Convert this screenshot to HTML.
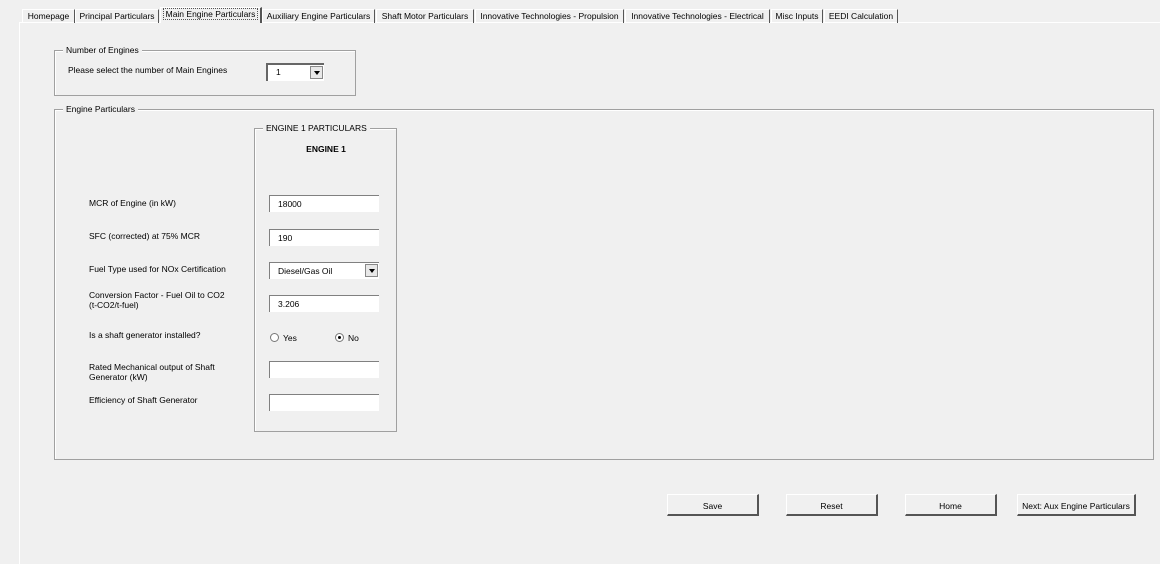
<!DOCTYPE html><html><head><style>
body{margin:0;width:1160px;height:563px;background:#f0f0f0;font-family:"Liberation Sans",sans-serif;font-size:8.5px;color:#000;position:relative;overflow:hidden}
.a{position:absolute}
.tab{position:absolute;top:9px;height:13px;line-height:13px;text-align:center;border-right:1px solid #555;border-left:1px solid #fff;border-top:1px solid #fff;white-space:nowrap}
.fs{position:absolute;border:1px solid #a0a0a0;box-shadow:inset 1px 1px 0 #fff;box-sizing:border-box}
.lg{position:absolute;top:-6px;left:8px;background:#f0f0f0;padding:0 3px;line-height:11px}
.in{position:absolute;left:269px;width:110px;height:17px;background:#fff;border-top:1px solid #808080;border-left:1px solid #808080;box-sizing:border-box;padding:3px 0 0 8px}
.lb{position:absolute;left:89px;line-height:10px}
.btn{position:absolute;top:494px;height:22px;line-height:22px;text-align:center;background:#f0f0f0;border:1px solid #fff;border-right:2px solid #555;border-bottom:2px solid #555;box-sizing:border-box}
.dd{position:absolute;width:13px;height:13px;background:#e8e8e8;border:1px solid #888;box-sizing:border-box}
.dd:after{content:"";position:absolute;left:3px;top:4px;border:3px solid transparent;border-top:4px solid #000}
</style></head><body>
<div class="a" style="left:19px;top:22px;width:1141px;height:541px;border-left:1px solid #fff;border-top:1px solid #fff"></div>
<div class="tab" style="left:22px;width:51px">Homepage</div>
<div class="tab" style="left:75px;width:82px">Principal Particulars</div>
<div class="tab" style="left:160px;top:7px;height:15px;width:99px;border-right:2px solid #555;background:#f0f0f0"><span style="border:1px dotted #555;padding:0 2px">Main Engine Particulars</span></div>
<div class="tab" style="left:262px;width:111px">Auxiliary Engine Particulars</div>
<div class="tab" style="left:376px;width:96px">Shaft Motor Particulars</div>
<div class="tab" style="left:475px;width:147px">Innovative Technologies - Propulsion</div>
<div class="tab" style="left:625px;width:143px">Innovative Technologies - Electrical</div>
<div class="tab" style="left:771px;width:50px">Misc Inputs</div>
<div class="tab" style="left:824px;width:72px">EEDI Calculation</div>

<div class="fs" style="left:54px;top:50px;width:302px;height:46px"><div class="lg">Number of Engines</div></div>
<div class="a" style="left:68px;top:65px">Please select the number of Main Engines</div>
<div class="a" style="left:266px;top:63px;width:58px;height:18px;background:#fff;border-top:2px solid #666;border-left:2px solid #666;box-sizing:border-box;padding:2px 0 0 8px">1</div>
<div class="dd" style="left:310px;top:66px"></div>

<div class="fs" style="left:54px;top:109px;width:1100px;height:351px"><div class="lg">Engine Particulars</div></div>
<div class="fs" style="left:254px;top:128px;width:143px;height:304px"><div class="lg">ENGINE 1 PARTICULARS</div></div>
<div class="a" style="left:254px;top:144px;width:144px;text-align:center;font-weight:bold">ENGINE 1</div>

<div class="lb" style="top:198px">MCR of Engine (in kW)</div>
<div class="lb" style="top:231px">SFC (corrected) at 75% MCR</div>
<div class="lb" style="top:264px">Fuel Type used for NOx Certification</div>
<div class="lb" style="top:290px">Conversion Factor - Fuel Oil to CO2<br>(t-CO2/t-fuel)</div>
<div class="lb" style="top:330px">Is a shaft generator installed?</div>
<div class="lb" style="top:362px">Rated Mechanical output of Shaft<br>Generator (kW)</div>
<div class="lb" style="top:395px">Efficiency of Shaft Generator</div>

<div class="in" style="top:195px">18000</div>
<div class="in" style="top:229px">190</div>
<div class="in" style="top:262px">Diesel/Gas Oil</div>
<div class="dd" style="left:365px;top:264px"></div>
<div class="in" style="top:295px">3.206</div>
<div class="a" style="left:270px;top:333px;width:7px;height:7px;border-radius:50%;background:#fff;border:1px solid #777"></div>
<div class="a" style="left:283px;top:333px">Yes</div>
<div class="a" style="left:335px;top:333px;width:7px;height:7px;border-radius:50%;background:#fff;border:1px solid #777"><div style="margin:2px;width:3px;height:3px;border-radius:50%;background:#000"></div></div>
<div class="a" style="left:348px;top:333px">No</div>
<div class="in" style="top:361px"></div>
<div class="in" style="top:394px"></div>

<div class="btn" style="left:667px;width:92px">Save</div>
<div class="btn" style="left:786px;width:92px">Reset</div>
<div class="btn" style="left:905px;width:92px">Home</div>
<div class="btn" style="left:1017px;width:119px">Next: Aux Engine Particulars</div>
</body></html>
